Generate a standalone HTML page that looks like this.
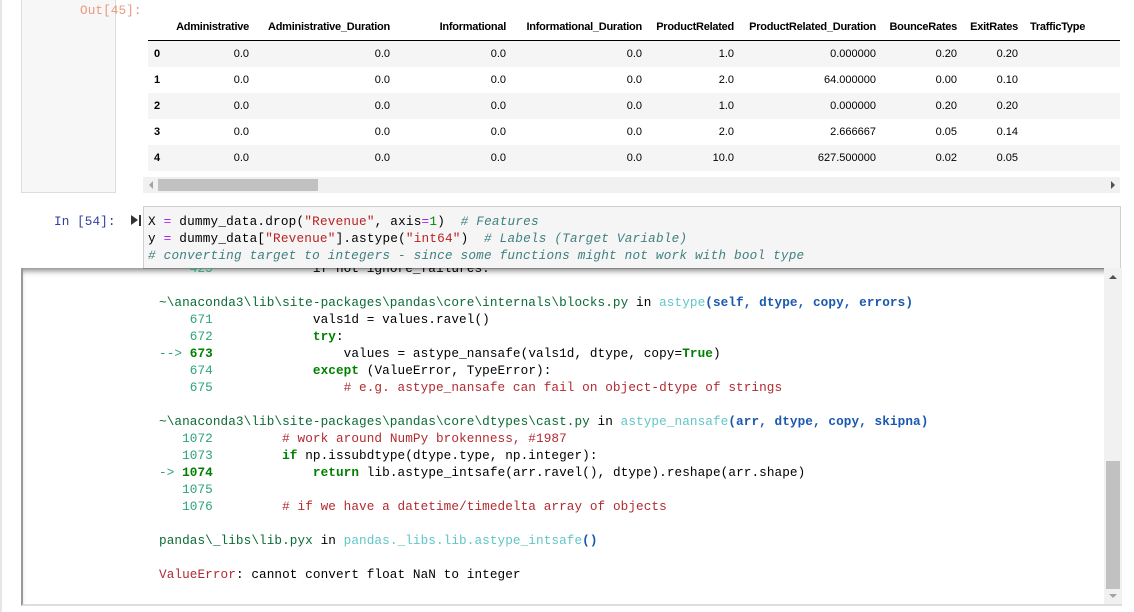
<!DOCTYPE html>
<html><head><style>
body{margin:0;width:1134px;height:612px;background:#fff;position:relative;overflow:hidden;font-family:"Liberation Sans",sans-serif}
.abs{position:absolute}
.mono{font-family:"Liberation Mono",monospace;font-size:12.7px;letter-spacing:0.08px;white-space:pre;line-height:17px}
table{border-collapse:collapse;font-size:11px;color:#000;table-layout:fixed;width:1000px}
td,th{padding:0;height:26px;text-align:right;white-space:nowrap;overflow:visible}
th{font-weight:bold;letter-spacing:-0.25px}
.g{color:#0b6b35}.ln{color:#2aa37a}.c{color:#60c6c8}.b{color:#1a58b0;font-weight:bold}.r{color:#b22b31}.k{color:#008000;font-weight:bold}
</style></head><body>
<div class="abs" style="left:0;top:0;width:2px;height:612px;background:#e6e6e6"></div>
<div class="abs" style="left:21px;top:0;width:93px;height:192px;background:#f7f7f7;border:1px solid #ddd;border-top:none"></div>
<div class="abs mono" style="left:80px;top:2px;color:#e89a80">Out[45]:</div>
<div class="abs" style="left:148px;top:14px;width:972px;height:157px;overflow:hidden">
<table>
<colgroup><col style="width:20px"><col style="width:81px"><col style="width:141px"><col style="width:116px"><col style="width:136px"><col style="width:92px"><col style="width:142px"><col style="width:81px"><col style="width:61px"><col style="width:130px"></colgroup>
<tr style="height:26px;border-bottom:1.5px solid #000"><th></th><th>Administrative</th><th>Administrative_Duration</th><th>Informational</th><th>Informational_Duration</th><th>ProductRelated</th><th>ProductRelated_Duration</th><th>BounceRates</th><th>ExitRates</th><th style="text-align:left;padding-left:12px">TrafficType</th></tr>
<tr style="background:#f5f5f5"><th style="text-align:left;padding-left:6px">0</th><td>0.0</td><td>0.0</td><td>0.0</td><td>0.0</td><td>1.0</td><td>0.000000</td><td>0.20</td><td>0.20</td><td></td></tr>
<tr><th style="text-align:left;padding-left:6px">1</th><td>0.0</td><td>0.0</td><td>0.0</td><td>0.0</td><td>2.0</td><td>64.000000</td><td>0.00</td><td>0.10</td><td></td></tr>
<tr style="background:#f5f5f5"><th style="text-align:left;padding-left:6px">2</th><td>0.0</td><td>0.0</td><td>0.0</td><td>0.0</td><td>1.0</td><td>0.000000</td><td>0.20</td><td>0.20</td><td></td></tr>
<tr><th style="text-align:left;padding-left:6px">3</th><td>0.0</td><td>0.0</td><td>0.0</td><td>0.0</td><td>2.0</td><td>2.666667</td><td>0.05</td><td>0.14</td><td></td></tr>
<tr style="background:#f5f5f5"><th style="text-align:left;padding-left:6px">4</th><td>0.0</td><td>0.0</td><td>0.0</td><td>0.0</td><td>10.0</td><td>627.500000</td><td>0.02</td><td>0.05</td><td></td></tr>
</table></div>
<div class="abs" style="left:143px;top:177px;width:977px;height:16px;background:#f1f1f1"></div>
<div class="abs" style="left:158px;top:179px;width:160px;height:12px;background:#c1c1c1"></div>
<div class="abs" style="left:149px;top:181px;width:0;height:0;border-top:4px solid transparent;border-bottom:4px solid transparent;border-right:4px solid #a3a3a3"></div>
<div class="abs" style="left:1111px;top:181px;width:0;height:0;border-top:4px solid transparent;border-bottom:4px solid transparent;border-left:4px solid #505050"></div>

<div class="abs mono" style="left:54px;top:213px;color:#303f9f">In [54]:</div>
<div class="abs" style="left:139px;top:215px;width:2px;height:11px;background:#333"></div>
<div class="abs" style="left:131px;top:215px;width:0;height:0;border-top:5.5px solid transparent;border-bottom:5.5px solid transparent;border-left:7px solid #333"></div>
<div class="abs mono" style="left:143px;top:206px;width:972px;height:55px;background:#f5f5f5;border:1px solid #cfcfcf;padding:6px 0 0 4px;color:#000;letter-spacing:0.2px">X <span style="color:#aa22ff">=</span> dummy_data.drop(<span style="color:#ba2121">"Revenue"</span>, axis<span style="color:#aa22ff">=</span><span style="color:#080">1</span>)  <i style="color:#408080"># Features</i>
y <span style="color:#aa22ff">=</span> dummy_data[<span style="color:#ba2121">"Revenue"</span>].astype(<span style="color:#ba2121">"int64"</span>)  <i style="color:#408080"># Labels (Target Variable)</i>
<i style="color:#408080"># converting target to integers - since some functions might not work with bool type</i></div>

<div class="abs" style="left:21px;top:268px;width:1099px;height:336px;overflow:hidden;border-left:2px solid #999;border-bottom:2px solid #ddd;box-shadow:inset 0 6px 6px -3px rgba(0,0,0,.45)">
<div class="abs mono" style="left:136px;top:-8px;color:#000"><span class="ln">    425</span>             if not ignore_failures:

<span class="g">~\anaconda3\lib\site-packages\pandas\core\internals\blocks.py</span> in <span class="c">astype</span><span class="b">(self, dtype, copy, errors)</span>
<span class="ln">    671</span>             vals1d = values.ravel()
<span class="ln">    672</span>             <span class="k">try</span>:
<span class="ln">--&gt; </span><span class="k">673</span>                 values = astype_nansafe(vals1d, dtype, copy=<span class="k">True</span>)
<span class="ln">    674</span>             <span class="k">except</span> (ValueError, TypeError):
<span class="ln">    675</span>                 <span class="r"># e.g. astype_nansafe can fail on object-dtype of strings</span>

<span class="g">~\anaconda3\lib\site-packages\pandas\core\dtypes\cast.py</span> in <span class="c">astype_nansafe</span><span class="b">(arr, dtype, copy, skipna)</span>
<span class="ln">   1072</span>         <span class="r"># work around NumPy brokenness, #1987</span>
<span class="ln">   1073</span>         <span class="k">if</span> np.issubdtype(dtype.type, np.integer):
<span class="ln">-&gt; </span><span class="k">1074</span>             <span class="k">return</span> lib.astype_intsafe(arr.ravel(), dtype).reshape(arr.shape)
<span class="ln">   1075</span> 
<span class="ln">   1076</span>         <span class="r"># if we have a datetime/timedelta array of objects</span>

<span class="g">pandas\_libs\lib.pyx</span> in <span class="c">pandas._libs.lib.astype_intsafe</span><span class="b">()</span>

<span class="r">ValueError</span>: cannot convert float NaN to integer</div>
<div class="abs" style="left:1081px;top:0;width:18px;height:336px;background:#f1f1f1"></div>
<div class="abs" style="left:1083px;top:193px;width:14px;height:128px;background:#c1c1c1"></div>
<div class="abs" style="left:1086px;top:7px;width:0;height:0;border-left:4px solid transparent;border-right:4px solid transparent;border-bottom:4px solid #505050"></div>
<div class="abs" style="left:1086px;top:326px;width:0;height:0;border-left:4px solid transparent;border-right:4px solid transparent;border-top:4px solid #a3a3a3"></div>
</div>
</body></html>
